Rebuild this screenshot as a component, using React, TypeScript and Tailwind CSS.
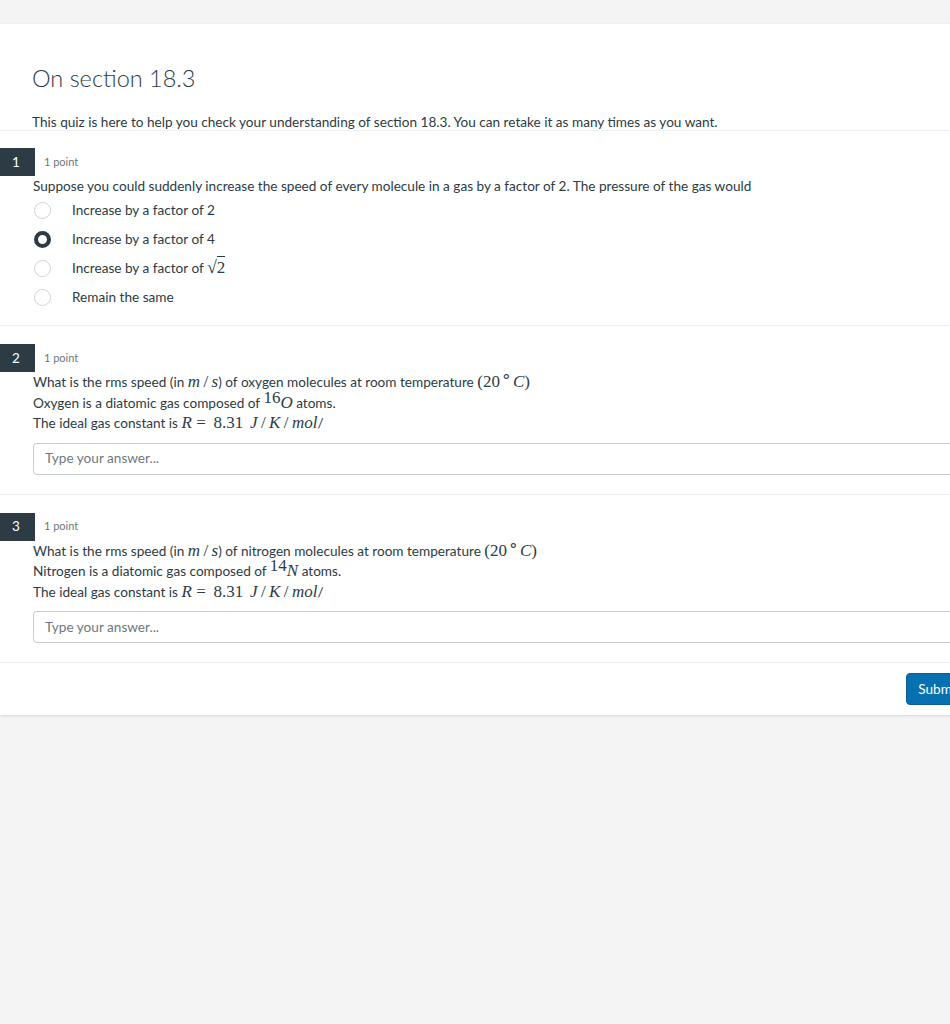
import React from "react";

const serif = "font-['Liberation_Serif',serif] text-[17px] leading-none";

function I({ children }: { children: React.ReactNode }) {
  return <span className={`${serif} italic`}>{children}</span>;
}
function U({ children }: { children: React.ReactNode }) {
  return <span className={serif}>{children}</span>;
}

function Badge({ n }: { n: number }) {
  return (
    <div className="flex items-center">
      <div className="w-[35px] h-[28px] bg-[#2d3b45] text-white text-[13.5px] flex items-center pl-[12px]">{n}</div>
      <div className="ml-[9px] text-[11px] text-[#6b7780]">1 point</div>
    </div>
  );
}

function Radio({ selected, label }: { selected?: boolean; label: React.ReactNode }) {
  return (
    <div className="h-[29px] flex items-center">
      <div
        className={
          selected
            ? "ml-[1px] w-[17px] h-[17px] rounded-full border-[4px] border-[#2d3b45] bg-white"
            : "ml-[1px] w-[17px] h-[17px] rounded-full border border-[#d0d4d7] bg-white"
        }
      />
      <div className="ml-[21px] text-[13.6px] text-[#2d3b45]">{label}</div>
    </div>
  );
}

function Input() {
  return (
    <div className="mt-[9px] h-[32px] rounded-[4px] border border-[#c7cdd1] flex items-center pl-[11px] text-[13.6px] text-[#6e7880]">
      Type your answer...
    </div>
  );
}

function GasQuestion({ n, gas, sup, atom }: { n: number; gas: string; sup: string; atom: string }) {
  return (
    <div className="border-t border-[#f0f0f0] pt-[18px] pb-[19px]">
      <Badge n={n} />
      <div className="pl-[33px] text-[13.6px] text-[#2d3b45] leading-[20.5px]">
        <div>
          What is the rms speed (in <I>m</I>
          <U>&thinsp;/&thinsp;</U>
          <I>s</I>) of {gas} molecules at room temperature <U>(20</U>
          <span className={`${serif} text-[9px] relative -top-[6px] mx-[1px]`}>∘</span>
          <I>C</I>
          <U>)</U>
        </div>
        <div>
          {gas === "oxygen" ? "Oxygen" : "Nitrogen"} is a diatomic gas composed of{" "}
          <span className={`${serif} text-[11.5px] relative -top-[5px]`}>{sup}</span>
          <I>{atom}</I> atoms.
        </div>
        <div>
          The ideal gas constant is <I>R</I>
          <U>&nbsp;=&nbsp;&thinsp;8.31&thinsp;&thinsp;</U>
          <I>J</I>
          <U>&thinsp;/&thinsp;</U>
          <I>K</I>
          <U>&thinsp;/&thinsp;</U>
          <I>mol</I>/
        </div>
        <Input />
      </div>
    </div>
  );
}

export default function App() {
  return (
    <div className="min-h-screen bg-[#f4f4f4] overflow-hidden pt-[24px] font-['Lato',sans-serif] text-[#2d3b45]">
      <div className="w-[1000px] bg-white shadow-[0_1px_3px_rgba(0,0,0,0.12)]">
        <div className="px-[32px] pt-[40px]">
          <h1 className="text-[23.5px] leading-[29px] font-light text-[#2d3b45]">On section 18.3</h1>
          <p className="mt-[21px] text-[13.6px] leading-[16px]">
            This quiz is here to help you check your understanding of section 18.3. You can retake it as many times as you want.
          </p>
        </div>

        <div className="border-t border-[#f0f0f0] pt-[17px] pb-[13px]">
          <Badge n={1} />
          <div className="pl-[33px]">
            <div className="text-[13.6px] leading-[20px]">
              Suppose you could suddenly increase the speed of every molecule in a gas by a factor of 2. The pressure of the gas would
            </div>
            <Radio label="Increase by a factor of 2" />
            <Radio selected label="Increase by a factor of 4" />
            <Radio
              label={
                <span>
                  Increase by a factor of{" "}
                  <span className={`${serif} text-[18px]`}>√</span>
                  <span className={`${serif} border-t border-[#2d3b45] pt-[1px]`}>2</span>
                </span>
              }
            />
            <Radio label="Remain the same" />
          </div>
        </div>

        <GasQuestion n={2} gas="oxygen" sup="16" atom="O" />
        <GasQuestion n={3} gas="nitrogen" sup="14" atom="N" />

        <div className="border-t border-[#f0f0f0] pt-[10px] pb-[10px] flex justify-end pr-[28px]">
          <button className="h-[32px] px-[11px] rounded-[4px] bg-[#0770b0] text-white text-[13.6px] border border-[#0a5f94]">
            Submit
          </button>
        </div>
      </div>
    </div>
  );
}
